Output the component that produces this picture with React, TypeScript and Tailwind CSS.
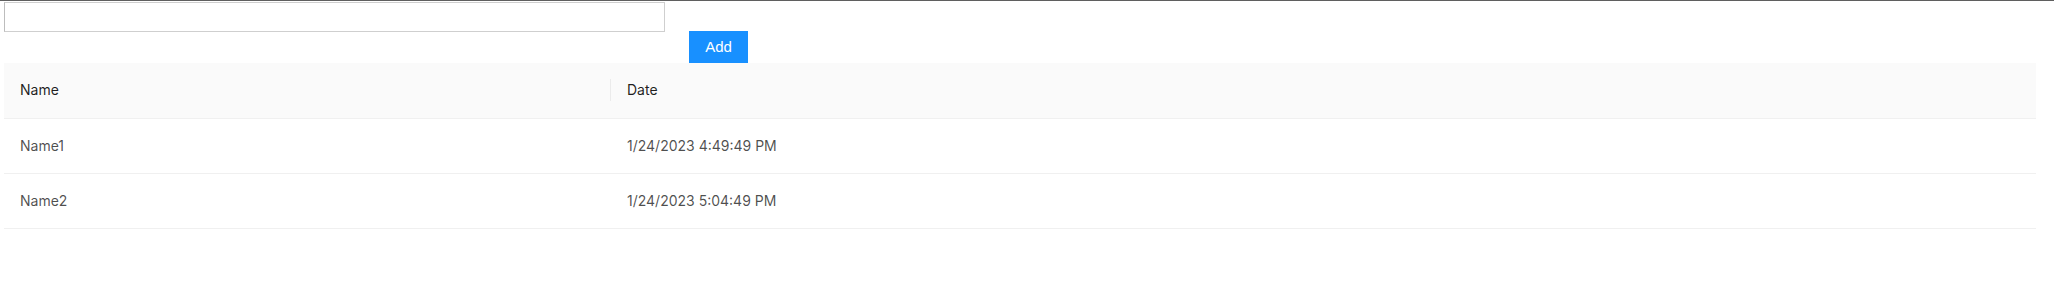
import { useState } from "react";

interface Row {
  name: string;
  date: string;
}

const INITIAL: Row[] = [
  { name: "Name1", date: "1/24/2023 4:49:49 PM" },
  { name: "Name2", date: "1/24/2023 5:04:49 PM" },
];

export default function App() {
  const [rows, setRows] = useState<Row[]>(INITIAL);
  const [text, setText] = useState("");

  function add() {
    if (!text.trim()) return;
    setRows([...rows, { name: text, date: new Date().toLocaleString("en-US") }]);
    setText("");
  }

  return (
    <div className="min-h-[294px] border-t border-[#5f5f5f] bg-white px-1 font-['Inter',sans-serif] text-sm">
      <div className="flex h-[62px] gap-6">
        <input
          value={text}
          onChange={(e) => setText(e.target.value)}
          className="mt-px h-[30px] w-[661px] self-start border border-[#cfcfcf] border-l-[#bdbdbd] bg-white px-1 outline-none"
        />
        <button
          onClick={add}
          className="mt-[30px] h-8 w-[59px] bg-[#1890ff] font-['Liberation_Sans',sans-serif] text-[15px] text-white"
        >
          Add
        </button>
      </div>

      <table className="w-[2032px] border-collapse text-left">
        <thead>
          <tr className="bg-[#fafafa]">
            <th className="relative h-[55px] w-[607px] border-b border-[#f0f0f0] px-4 font-normal text-[rgba(0,0,0,0.88)]">
              Name
              <span className="absolute right-0 top-1/2 h-[22px] w-px -translate-y-1/2 bg-[#ebebeb]" />
            </th>
            <th className="h-[55px] border-b border-[#f0f0f0] px-4 font-normal text-[rgba(0,0,0,0.88)]">
              Date
            </th>
          </tr>
        </thead>
        <tbody>
          {rows.map((r) => (
            <tr key={r.name + r.date}>
              <td className="h-[55px] border-b border-[#f0f0f0] px-4 text-[rgba(0,0,0,0.7)]">{r.name}</td>
              <td className="h-[55px] border-b border-[#f0f0f0] px-4 text-[rgba(0,0,0,0.7)]">{r.date}</td>
            </tr>
          ))}
        </tbody>
      </table>
    </div>
  );
}
